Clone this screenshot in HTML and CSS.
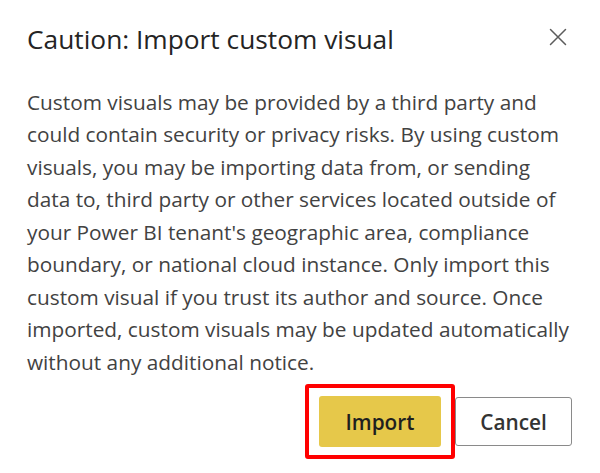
FILE: index.html
```html
<!DOCTYPE html>
<html lang="en">
<head>
<meta charset="utf-8">
<title>Caution: Import custom visual</title>
<link rel="stylesheet" href="styles.css">
</head>
<body>
<div class="dialog">
  <div class="header">
    <h1 class="title">Caution: Import custom visual</h1>
    <button class="close" aria-label="Close">
      <svg width="18" height="18" viewBox="0 0 18 18"><path d="M1.5 1.5 L16.5 16.5 M16.5 1.5 L1.5 16.5" stroke="#5c5c5c" stroke-width="1.5" fill="none" stroke-linecap="round"/></svg>
    </button>
  </div>
  <p class="body-text">Custom visuals may be provided by a third party and<br>could contain security or privacy risks. By using custom<br>visuals, you may be importing data from, or sending<br>data to, third party or other services located outside of<br>your Power BI tenant's geographic area, compliance<br>boundary, or national cloud instance. Only import this<br>custom visual if you trust its author and source. Once<br>imported, custom visuals may be updated automatically<br>without any additional notice.</p>
  <div class="actions">
    <span class="highlight"><button class="btn btn-primary">Import</button></span>
    <button class="btn btn-secondary">Cancel</button>
  </div>
</div>
</body>
</html>
```

FILE: styles.css
```css
html, body {
  margin: 0;
  padding: 0;
  background: #ffffff;
}
body {
  font-family: "Open Sans", "Noto Sans", sans-serif;
  width: 600px;
  height: 473px;
  overflow: hidden;
}
.dialog {
  padding: 21px 28px 0 27px;
}
.header {
  display: flex;
  align-items: center;
  justify-content: space-between;
  height: 36px;
}
.title {
  margin: 0;
  font-size: 26.3px;
  line-height: 36px;
  font-weight: 400;
  color: #242424;
}
.close {
  border: 0;
  background: transparent;
  padding: 0;
  width: 20px;
  height: 20px;
  margin: -4px 4px 0 0;
  display: flex;
  align-items: center;
  justify-content: center;
}
.body-text {
  margin: 28.7px 0 0 0;
  font-size: 20.8px;
  line-height: 32.5px;
  color: #424242;
  white-space: nowrap;
}
.actions {
  margin-top: 6px;
  display: flex;
  justify-content: flex-end;
  align-items: center;
}
.highlight {
  display: flex;
  border: 4px solid #ff0000;
  border-radius: 3px;
  padding: 8px 10px;
}
.btn {
  font-family: "Open Sans", "Noto Sans", sans-serif;
  font-size: 20.8px;
  font-weight: 600;
  border-radius: 3px;
  padding: 0;
  display: flex;
  align-items: center;
  justify-content: center;
}
.btn-primary {
  width: 122px;
  height: 51px;
  background: #e6c84a;
  border: 0;
  color: #1f1f1f;
}
.btn-secondary {
  width: 117px;
  height: 49px;
  background: #ffffff;
  border: 1px solid #8a8a8a;
  color: #333333;
}
```
